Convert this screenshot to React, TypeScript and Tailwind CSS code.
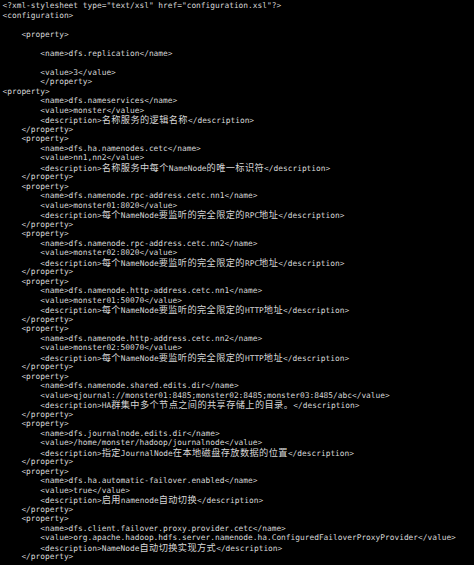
import React from "react";

const lines: string[] = [
  '<?xml-stylesheet type="text/xsl" href="configuration.xsl"?>',
  "<configuration>",
  "",
  "    <property>",
  "",
  "        <name>dfs.replication</name>",
  "",
  "        <value>3</value>",
  "        </property>",
  "<property>",
  "        <name>dfs.nameservices</name>",
  "        <value>monster</value>",
  "        <description>名称服务的逻辑名称</description>",
  "    </property>",
  "    <property>",
  "        <name>dfs.ha.namenodes.cetc</name>",
  "        <value>nn1,nn2</value>",
  "        <description>名称服务中每个NameNode的唯一标识符</description>",
  "    </property>",
  "    <property>",
  "        <name>dfs.namenode.rpc-address.cetc.nn1</name>",
  "        <value>monster01:8020</value>",
  "        <description>每个NameNode要监听的完全限定的RPC地址</description>",
  "    </property>",
  "    <property>",
  "        <name>dfs.namenode.rpc-address.cetc.nn2</name>",
  "        <value>monster02:8020</value>",
  "        <description>每个NameNode要监听的完全限定的RPC地址</description>",
  "    </property>",
  "    <property>",
  "        <name>dfs.namenode.http-address.cetc.nn1</name>",
  "        <value>monster01:50070</value>",
  "        <description>每个NameNode要监听的完全限定的HTTP地址</description>",
  "    </property>",
  "    <property>",
  "        <name>dfs.namenode.http-address.cetc.nn2</name>",
  "        <value>monster02:50070</value>",
  "        <description>每个NameNode要监听的完全限定的HTTP地址</description>",
  "    </property>",
  "    <property>",
  "        <name>dfs.namenode.shared.edits.dir</name>",
  "        <value>qjournal://monster01:8485;monster02:8485;monster03:8485/abc</value>",
  "        <description>HA群集中多个节点之间的共享存储上的目录。</description>",
  "    </property>",
  "    <property>",
  "        <name>dfs.journalnode.edits.dir</name>",
  "        <value>/home/monster/hadoop/journalnode</value>",
  "        <description>指定JournalNode在本地磁盘存放数据的位置</description>",
  "    </property>",
  "    <property>",
  "        <name>dfs.ha.automatic-failover.enabled</name>",
  "        <value>true</value>",
  "        <description>启用namenode自动切换</description>",
  "    </property>",
  "    <property>",
  "        <name>dfs.client.failover.proxy.provider.cetc</name>",
  "        <value>org.apache.hadoop.hdfs.server.namenode.ha.ConfiguredFailoverProxyProvider</value>",
  "        <description>NameNode自动切换实现方式</description>",
  "    </property>",
];

const cjk = /([\u3000-\u303f\u4e00-\u9fff\uff00-\uffef]+)/;

function Line({ text }: { text: string }) {
  const parts = text.split(cjk);
  return (
    <div className="h-[9.5px] leading-[9.5px] whitespace-pre">
      {parts.map((p, i) =>
        i % 2 === 1 ? (
          <span
            key={i}
            className="text-[9.2px] leading-[9.5px] font-['Noto_Sans_CJK_SC',sans-serif] tracking-[0.4px]"
          >
            {p}
          </span>
        ) : (
          <span key={i}>{p}</span>
        )
      )}
    </div>
  );
}

export default function App() {
  return (
    <div className="w-[474px] h-[565px] overflow-hidden bg-black text-[#d6d6d6] pt-[1px] pl-[2.5px] font-['DejaVu_Sans_Mono','Noto_Sans_CJK_SC',monospace] text-[7.85px]">
      {lines.map((l, i) => (
        <Line key={i} text={l} />
      ))}
    </div>
  );
}
